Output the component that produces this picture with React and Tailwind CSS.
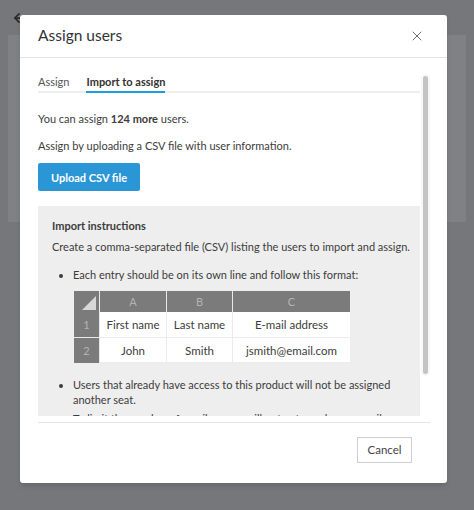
import { X, ArrowLeft } from "lucide-react";

const font = { fontFamily: 'Lato, "Noto Sans", sans-serif' };

function Backdrop() {
  return (
    <div className="flex h-[510px] w-[474px] flex-col bg-[#76777a]">
      <div className="flex h-[35px] items-center px-[12px] text-[#2a2a2a]">
        <ArrowLeft size={14} strokeWidth={3} />
      </div>
      <div className="flex h-[187px] gap-0 px-[8px]">
        <div className="flex-1 bg-[#808184]" />
      </div>
      <div className="flex-1" />
    </div>
  );
}

function Table() {
  const head = "bg-[#7b7b7b] text-[#b4b4b4] text-[11px] flex items-center justify-center border-r border-[#e8e8e8]";
  const cell = "bg-white text-[#3c3c3c] text-[11.5px] flex items-center justify-center border-r border-b border-[#ececec]";
  return (
    <div className="ml-[1px] mt-[9px] grid w-[276px] grid-cols-[26px_67px_66px_117px] grid-rows-[21px_26px_25px]">
      <div className={head + " relative"}>
        <svg width="14" height="14" viewBox="0 0 14 14" className="absolute bottom-[2px] right-[3px]">
          <polygon points="14,0 14,14 0,14" fill="#d8d8d8" />
        </svg>
      </div>
      <div className={head}>A</div>
      <div className={head}>B</div>
      <div className={head + " border-r-0"}>C</div>
      <div className={head + " border-b border-[#e8e8e8]"}>1</div>
      <div className={cell}>First name</div>
      <div className={cell}>Last name</div>
      <div className={cell + " border-r-0"}>E-mail address</div>
      <div className={head}>2</div>
      <div className={cell}>John</div>
      <div className={cell}>Smith</div>
      <div className={cell + " border-r-0"}>jsmith@email.com</div>
    </div>
  );
}

function Modal() {
  return (
    <div className="absolute left-[20px] top-[15px] flex h-[468px] w-[427px] flex-col rounded-[3px] bg-white text-[#3c3c3c] shadow-md" style={font}>
      <div className="flex h-[43px] items-center justify-between border-b border-[#e4e4e4] pl-[18px] pr-[22px]">
        <h2 className="text-[15.5px] font-normal text-[#333]">Assign users</h2>
        <X size={16} strokeWidth={1.3} className="text-[#555]" />
      </div>
      <div className="flex h-[358px] overflow-hidden">
        <div className="ml-[18px] w-[382px] overflow-hidden text-[11px] leading-[15px]">
          <div className="mt-[16px] flex gap-[17px] border-b-2 border-[#eeeeee]">
            <span className="pb-[2px] text-[#555]">Assign</span>
            <span className="-mb-[2px] border-b-2 border-[#1b9bd7] pb-[2px] font-bold text-[#333]">Import to assign</span>
          </div>
          <p className="mt-[18px]">
            You can assign <span className="font-bold">124 more</span> users.
          </p>
          <p className="mt-[12px]">Assign by uploading a CSV file with user information.</p>
          <button className="mt-[10px] h-[28px] w-[102px] rounded-[2px] bg-[#2b96d6] font-bold text-white">Upload CSV file</button>
          <div className="mt-[15px] bg-[#eeeeee] px-[14px] pb-[20px] pt-[12px]">
            <p className="font-bold">Import instructions</p>
            <p className="mt-[6px] whitespace-nowrap">Create a comma-separated file (CSV) listing the users to import and assign.</p>
            <ul className="mt-[13px] list-disc pl-[21px]">
              <li>
                Each entry should be on its own line and follow this format:
                <Table />
              </li>
              <li className="mt-[14px]">Users that already have access to this product will not be assigned another seat.</li>
              <li className="mt-[4px]">To limit the number of emails, users will not get a welcome email when they are assigned.</li>
            </ul>
          </div>
        </div>
        <div className="ml-[1px] mt-[16px] flex h-[302px] w-[9px] justify-center rounded-full bg-[#f7f7f7] py-[2px]">
          <div className="h-full w-[5px] rounded-full bg-[#c4c4c4]" />
        </div>
      </div>
      <div className="ml-[18px] mr-[17px] mt-[6px] border-t border-[#e4e4e4]" />
      <div className="flex flex-1 items-start justify-end pr-[35px] pt-[14px]">
        <button className="h-[26px] w-[55px] border border-[#cfcfcf] bg-white text-[11.5px] text-[#444]">Cancel</button>
      </div>
    </div>
  );
}

export default function App() {
  return (
    <div className="relative h-[510px] w-[474px] overflow-hidden">
      <Backdrop />
      <Modal />
    </div>
  );
}
